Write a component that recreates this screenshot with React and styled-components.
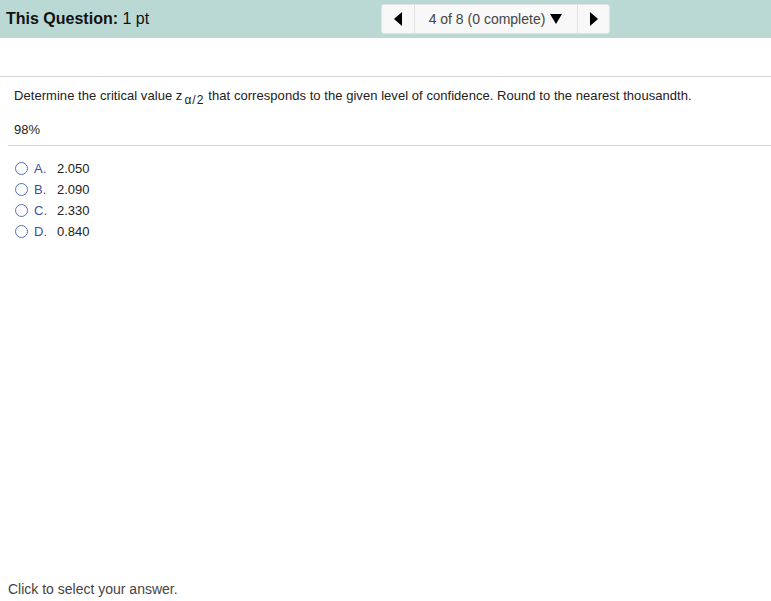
import React, { useState } from 'react';
import styled, { createGlobalStyle } from 'styled-components';

const GlobalStyle = createGlobalStyle`
  html, body {
    margin: 0;
    padding: 0;
    background: #fff;
    font-family: "Liberation Sans", Arial, sans-serif;
    color: #222;
  }
`;

const Page = styled.div`
  display: flex;
  flex-direction: column;
  height: 601px;
`;

const Header = styled.div`
  display: flex;
  align-items: center;
  height: 38px;
  background-color: #bad9d5;
  padding: 0 6px;
`;

const HeaderTitle = styled.div`
  width: 375px;
  font-size: 16px;
  color: #111;

  strong {
    font-weight: bold;
  }
`;

const NavGroup = styled.div`
  display: flex;
  height: 28px;
  background-color: #f8f8f8;
  border: 1px solid #e2e2e2;
  border-radius: 3px;
`;

const NavButton = styled.button`
  display: flex;
  align-items: center;
  justify-content: center;
  width: ${p => p.$wide ? '163px' : '32px'};
  height: 100%;
  padding: 0;
  border: none;
  border-left: ${p => p.$divider ? '1px solid #e2e2e2' : 'none'};
  background: transparent;
  font-family: inherit;
  font-size: 14px;
  color: #444;
  cursor: pointer;
  gap: 4px;
`;

const Spacer = styled.div`
  height: 38px;
  border-bottom: 1px solid #d4d8d8;
`;

const Question = styled.div`
  padding: 11px 0 0 14px;
  font-size: 13px;
  letter-spacing: 0.05px;
  color: #222;
`;

const Sub = styled.span`
  font-size: 12px;
  position: relative;
  top: 4px;
  margin-left: 2px;
  margin-right: 4px;
  letter-spacing: 1px;
`;

const Given = styled.div`
  padding: 19px 0 8px 14px;
  font-size: 13px;
  color: #222;
`;

const Rule = styled.div`
  margin-left: 8px;
  border-top: 1px solid #d4d8d8;
`;

const Options = styled.ul`
  list-style: none;
  margin: 0;
  padding: 15px 0 0 15px;
  display: flex;
  flex-direction: column;
  gap: 6px;
`;

const Option = styled.li`
  display: flex;
  align-items: center;
  height: 15px;
  font-size: 13px;
  cursor: pointer;
`;

const Radio = styled.span`
  box-sizing: border-box;
  width: 13px;
  height: 13px;
  border: 1.5px solid #5671b8;
  border-radius: 50%;
  margin-right: 6px;
  background: ${p => p.$on ? 'radial-gradient(circle, #5671b8 35%, transparent 40%)' : 'transparent'};
`;

const Letter = styled.span`
  width: 23px;
  color: #3d4f9f;
`;

const Value = styled.span`
  color: #222;
`;

const Footer = styled.div`
  margin-top: auto;
  padding: 0 0 4px 8px;
  font-size: 14px;
  color: #444;
`;

const Tri = ({ dir }) => {
  const pts = dir === 'left' ? '9,1 9,15 1,8' : dir === 'right' ? '1,1 1,15 9,8' : '1,1 13,1 7,11';
  const w = dir === 'down' ? 14 : 10;
  const h = dir === 'down' ? 12 : 16;
  return (
    <svg width={w} height={h} viewBox={`0 0 ${w} ${h}`}>
      <polygon points={pts} fill="#000" />
    </svg>
  );
};

const choices = [
  { key: 'A', value: '2.050' },
  { key: 'B', value: '2.090' },
  { key: 'C', value: '2.330' },
  { key: 'D', value: '0.840' },
];

export default function App() {
  const [picked, setPicked] = useState(null);

  return (
    <Page>
      <GlobalStyle />
      <Header>
        <HeaderTitle><strong>This Question:</strong> 1 pt</HeaderTitle>
        <NavGroup>
          <NavButton><Tri dir="left" /></NavButton>
          <NavButton $wide $divider>4 of 8 (0 complete) <Tri dir="down" /></NavButton>
          <NavButton $divider><Tri dir="right" /></NavButton>
        </NavGroup>
      </Header>
      <Spacer />
      <Question>
        Determine the critical value z<Sub>α/2</Sub>that corresponds to the given level of confidence. Round to the nearest thousandth.
      </Question>
      <Given>98%</Given>
      <Rule />
      <Options>
        {choices.map(c => (
          <Option key={c.key} onClick={() => setPicked(c.key)}>
            <Radio $on={picked === c.key} />
            <Letter>{c.key}.</Letter>
            <Value>{c.value}</Value>
          </Option>
        ))}
      </Options>
      <Footer>Click to select your answer.</Footer>
    </Page>
  );
}
